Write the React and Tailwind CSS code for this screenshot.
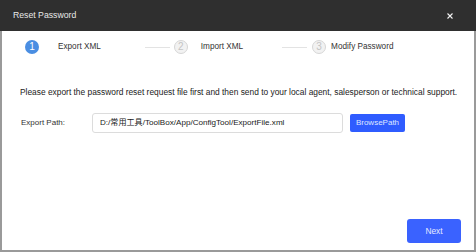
import React from 'react'

const font = { fontFamily: '"Liberation Sans", Arial, "Noto Sans CJK SC", sans-serif' }

const Step = ({ num, label, active, gap }) => (
  <div className="flex items-center">
    <div
      className={
        active
          ? 'w-[14px] h-[14px] rounded-full bg-[#4a8ee2] text-white flex items-center justify-center text-[10px] leading-none'
          : 'w-[14px] h-[14px] rounded-full bg-[#f2f2f2] border border-[#d6d6d6] text-[#c4c4c4] flex items-center justify-center text-[10px] leading-none'
      }
    >
      {num}
    </div>
    <span className={'text-[8.2px] text-[#333] ' + gap}>{label}</span>
  </div>
)

export default function App() {
  return (
    <div className="w-[476px] h-[252px] flex flex-col bg-white" style={font}>
      {/* title bar */}
      <div className="h-[31px] bg-[#2f2f2f] flex items-center justify-between pl-[13px] pr-[23px]">
        <span className="text-[8.7px] text-[#e8e8e8]">Reset Password</span>
        <svg width="6" height="6" viewBox="0 0 6 6">
          <path d="M0.5 0.5 L5.5 5.5 M5.5 0.5 L0.5 5.5" stroke="#f2f2f2" strokeWidth="1.1" />
        </svg>
      </div>

      <div className="flex-1 flex flex-col border-l-2 border-r-2 border-b-2 border-[#9a9a9a]">
        {/* steps */}
        <div className="h-[32px] flex items-center pl-[23px]">
          <Step num="1" label="Export XML" active gap="ml-[19px]" />
          <div className="w-[25px] h-px bg-[#e3e3e3] ml-[44px]" />
          <div className="ml-[4px]">
            <Step num="2" label="Import XML" gap="ml-[13px]" />
          </div>
          <div className="w-[25px] h-px bg-[#e3e3e3] ml-[39px]" />
          <div className="ml-[5px]">
            <Step num="3" label="Modify Password" gap="ml-[5px]" />
          </div>
        </div>

        {/* description */}
        <p className="mt-[24px] pl-[18px] text-[8.4px] text-[#222] leading-[10px] whitespace-nowrap">
          Please export the password reset request file first and then send to your local agent, salesperson or technical support.
        </p>

        {/* export path */}
        <div className="mt-[16px] pl-[19px] flex items-center">
          <span className="w-[71px] text-[8px] text-[#333]">Export Path:</span>
          <div className="w-[251px] h-[20px] border border-[#dcdcdc] rounded-[3px] flex items-center pl-[7px] text-[8.1px] text-[#222]">
            D:/常用工具/ToolBox/App/ConfigTool/ExportFile.xml
          </div>
          <button className="ml-[7px] w-[55px] h-[18px] bg-[#2f5cff] rounded-[2px] text-[8px] text-[#dfe6ff] flex items-center justify-center">
            BrowsePath
          </button>
        </div>

        {/* footer */}
        <div className="flex-1 flex items-end justify-end pr-[13px] pb-[7px]">
          <button className="w-[54px] h-[24px] bg-[#3a62ff] rounded-[3px] text-[8.4px] text-[#e6ebff] flex items-center justify-center">
            Next
          </button>
        </div>
      </div>
    </div>
  )
}
